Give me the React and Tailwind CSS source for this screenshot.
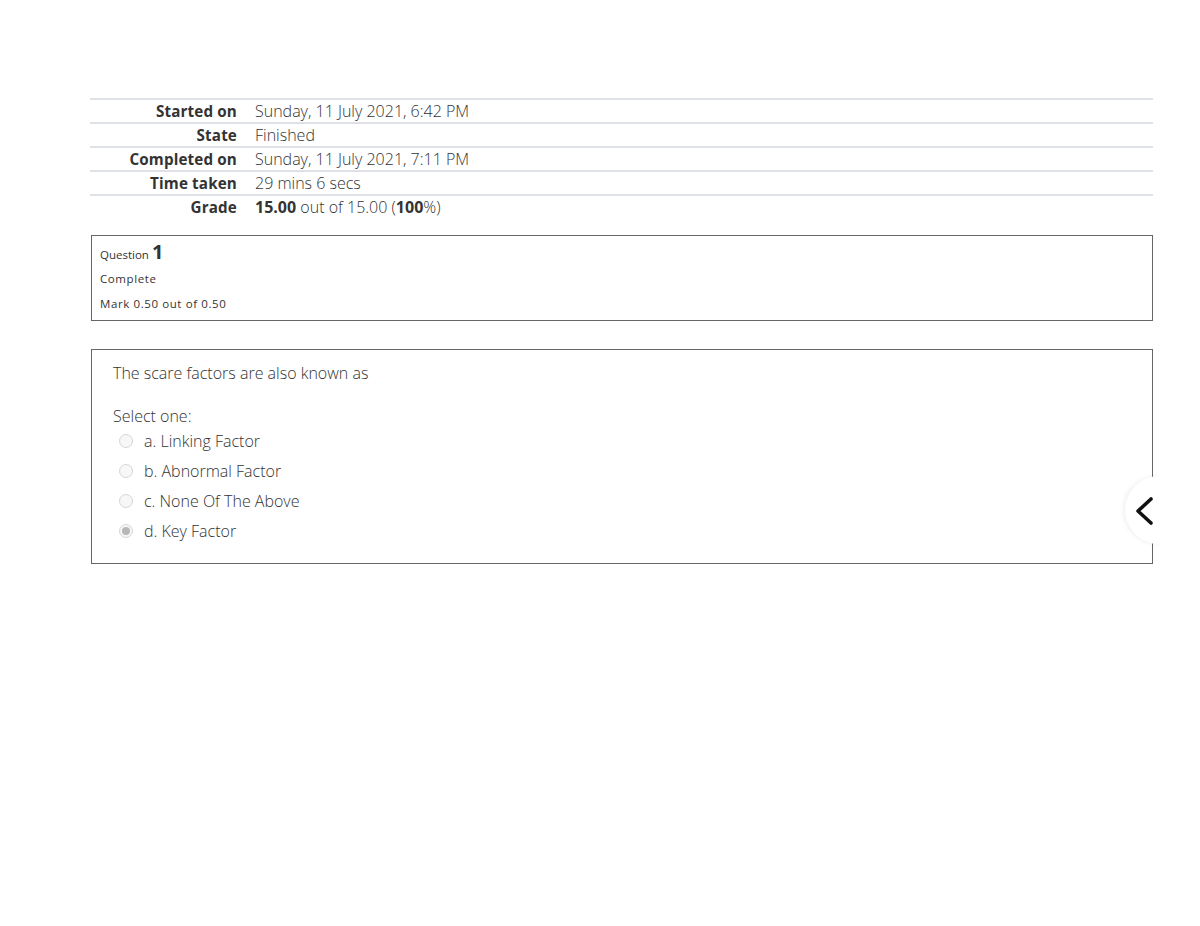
const summary = [
  { label: "Started on", value: "Sunday, 11 July 2021, 6:42 PM" },
  { label: "State", value: "Finished" },
  { label: "Completed on", value: "Sunday, 11 July 2021, 7:11 PM" },
  { label: "Time taken", value: "29 mins 6 secs" },
  {
    label: "Grade",
    value: (
      <>
        <b className="font-bold">15.00</b> out of 15.00 (<b className="font-bold">100</b>%)
      </>
    ),
  },
];

const options = [
  { text: "a. Linking Factor", checked: false },
  { text: "b. Abnormal Factor", checked: false },
  { text: "c. None Of The Above", checked: false },
  { text: "d. Key Factor", checked: true },
];

const Radio = ({ checked }) => (
  <span className="w-[14px] h-[14px] rounded-full border border-[#d6d6d6] bg-[#f7f7f7] flex items-center justify-center shrink-0">
    {checked && <span className="w-[8px] h-[8px] rounded-full bg-[#b8b8b8]" />}
  </span>
);

export default function App() {
  return (
    <div
      className="relative w-[1200px] h-[926px] bg-white text-[#333] overflow-hidden"
      style={{ fontFamily: '"Open Sans", "Noto Sans", sans-serif' }}
    >
      <div className="pt-[98px] pl-[90px] w-[1153px]">
        {/* Attempt summary */}
        <table className="w-full border-collapse">
          <tbody>
            {summary.map((row) => (
              <tr key={row.label} className="border-t-2 border-[#dee2e6]">
                <th className="w-[165px] text-right font-bold pr-[18px] pt-[1px] leading-[21px] text-[15.2px] tracking-[0.15px] text-[#333]">
                  {row.label}
                </th>
                <td className="leading-[21px] pt-[1px] font-light text-[16px] text-[#333]">{row.value}</td>
              </tr>
            ))}
          </tbody>
        </table>

        {/* Question info */}
        <div className="mt-[17px] ml-[1px] w-[1062px] h-[86px] border border-[#666] px-[8px] pt-[6px]">
          <div className="flex items-baseline gap-[3px] text-[11.5px] leading-[20px]">
            <span>Question</span>
            <span className="text-[20px] font-bold leading-[20px]">1</span>
          </div>
          <div className="text-[11.5px] tracking-[0.6px] mt-[5px] leading-[18px]">Complete</div>
          <div className="text-[11.5px] tracking-[0.6px] mt-[7px] leading-[18px]">Mark 0.50 out of 0.50</div>
        </div>

        {/* Question content */}
        <div className="mt-[28px] ml-[1px] w-[1062px] h-[215px] border border-[#666] pl-[21px] pt-[11px] text-[16px] font-light">
          <div className="leading-[24px]">The scare factors are also known as</div>
          <div className="mt-[19px] leading-[24px]">Select one:</div>
          <div className="flex flex-col -mt-[2px]">
            {options.map((o) => (
              <div key={o.text} className="flex items-center h-[30px] pl-[6px] gap-[11px]">
                <Radio checked={o.checked} />
                <span className="leading-[24px]">{o.text}</span>
              </div>
            ))}
          </div>
        </div>
      </div>

      {/* Drawer toggle */}
      <div className="absolute left-[1125px] top-[476px] w-[36px] h-[68px] rounded-l-full bg-white shadow-[-2px_0_4px_rgba(0,0,0,0.06)] flex items-center">
        <svg width="36" height="68" viewBox="0 0 36 68" fill="none">
          <path d="M26 23 L13 35 L26 47" stroke="#111" strokeWidth="3.6" strokeLinecap="round" strokeLinejoin="round" />
        </svg>
      </div>
    </div>
  );
}
